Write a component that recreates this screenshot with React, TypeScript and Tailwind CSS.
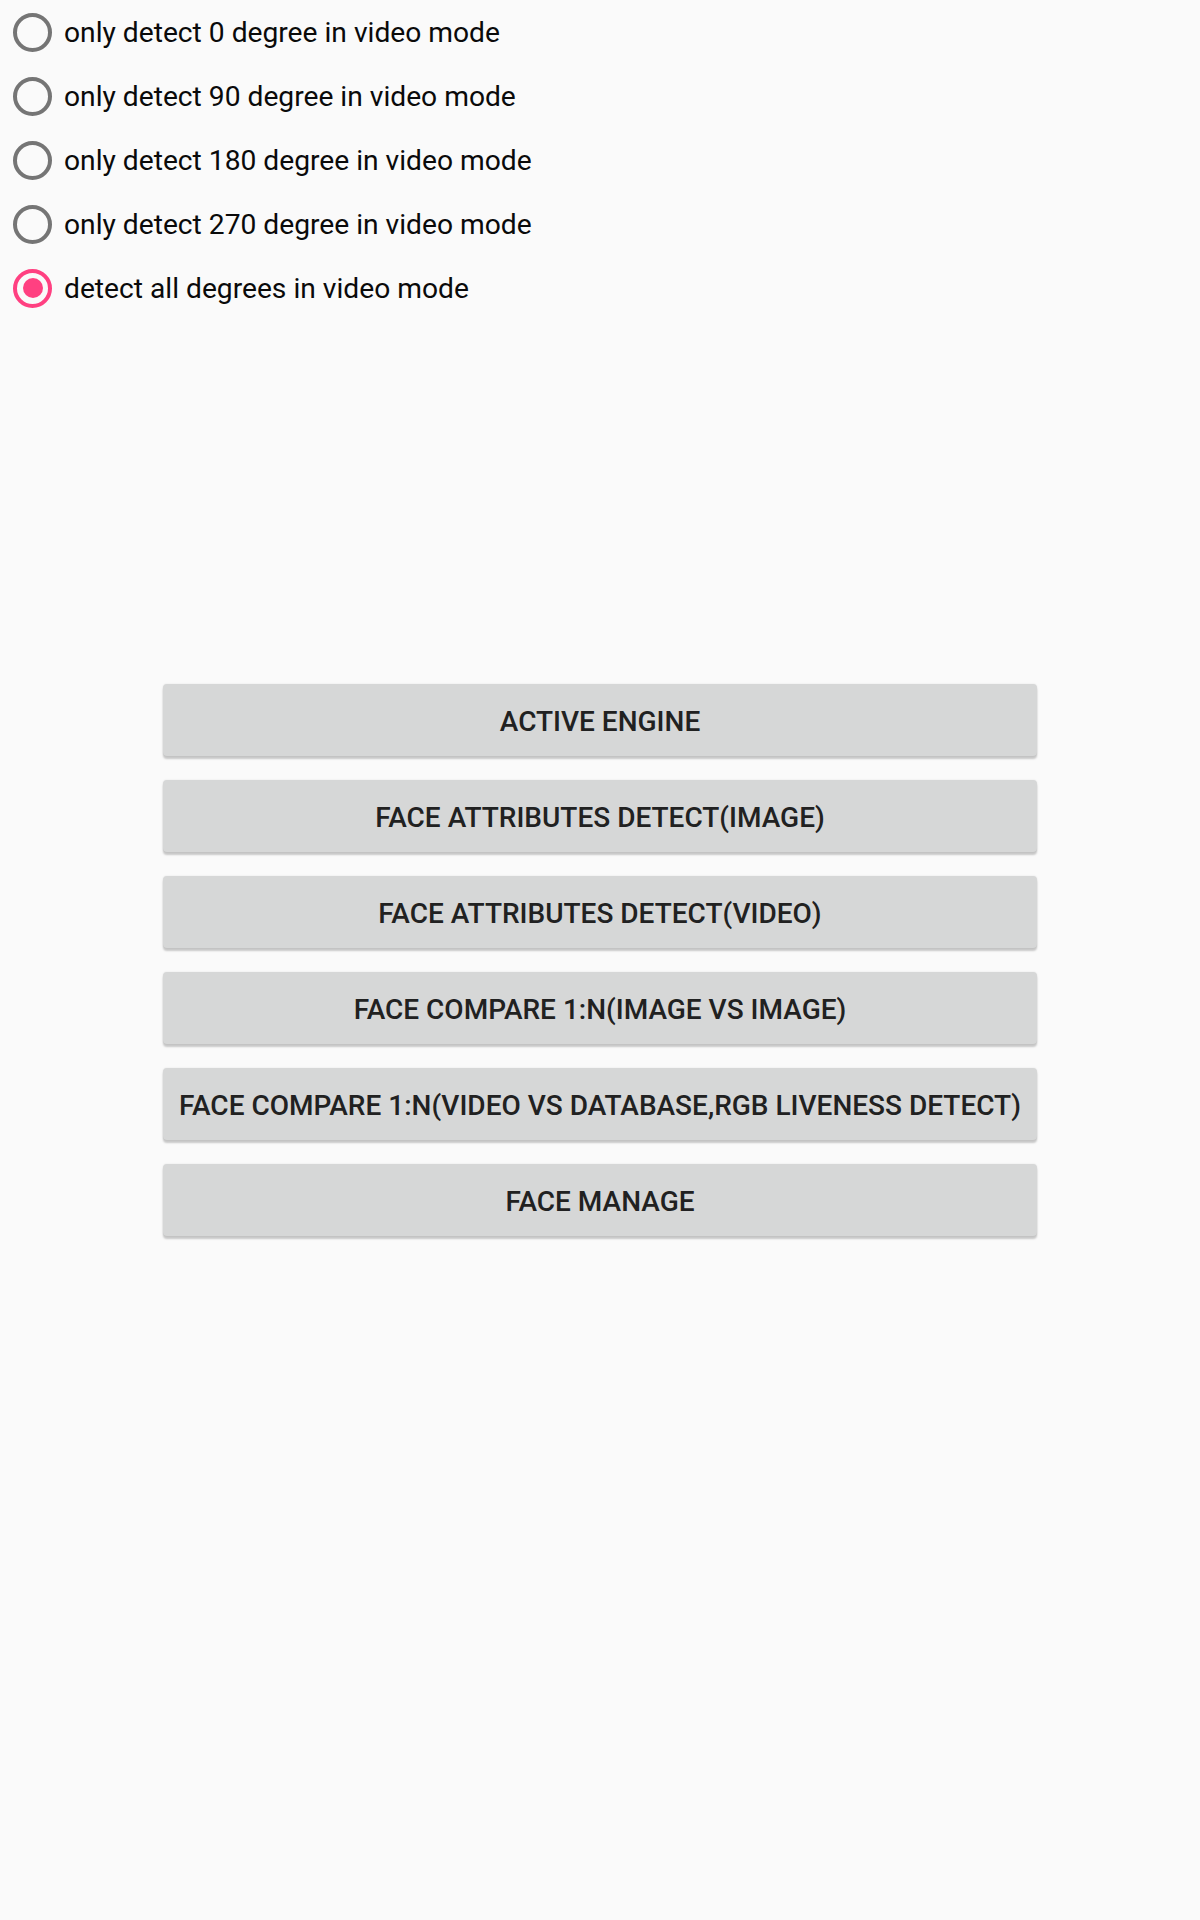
import React, { useState } from "react";

const options = [
  "only detect 0 degree in video mode",
  "only detect 90 degree in video mode",
  "only detect 180 degree in video mode",
  "only detect 270 degree in video mode",
  "detect all degrees in video mode",
];

const actions = [
  "ACTIVE ENGINE",
  "FACE ATTRIBUTES DETECT(IMAGE)",
  "FACE ATTRIBUTES DETECT(VIDEO)",
  "FACE COMPARE 1:N(IMAGE VS IMAGE)",
  "FACE COMPARE 1:N(VIDEO VS DATABASE,RGB LIVENESS DETECT)",
  "FACE MANAGE",
];

function Radio({ checked }: { checked: boolean }) {
  return (
    <span
      className={
        checked
          ? "flex h-[39px] w-[39px] shrink-0 items-center justify-center rounded-full border-[4px] border-[#ff4081]"
          : "flex h-[39px] w-[39px] shrink-0 items-center justify-center rounded-full border-[4px] border-[#757575]"
      }
    >
      {checked && <span className="h-[20px] w-[20px] rounded-full bg-[#ff4081]" />}
    </span>
  );
}

export default function App() {
  const [selected, setSelected] = useState(4);

  return (
    <div className="min-h-[1920px] w-full bg-[#fafafa] font-['Roboto','Liberation_Sans',sans-serif]">
      <div className="flex flex-col">
        {options.map((label, i) => (
          <button
            key={label}
            onClick={() => setSelected(i)}
            className="flex h-[64px] items-center gap-[12px] pl-[13px] text-left"
          >
            <Radio checked={selected === i} />
            <span className="pt-[2px] text-[28.2px] leading-none text-[#0a0a0a]">{label}</span>
          </button>
        ))}
      </div>

      <div className="mx-auto mt-[364px] flex w-[874px] flex-col gap-[24px]">
        {actions.map((label) => (
          <button
            key={label}
            className="flex h-[72px] items-center justify-center rounded-[4px] bg-[#d6d7d7] px-[16px] pt-[3px] text-[28px] font-medium leading-none text-[#212121] shadow-[0_3px_2px_rgba(0,0,0,0.2),0_0_2px_rgba(0,0,0,0.1)]"
          >
            {label}
          </button>
        ))}
      </div>
    </div>
  );
}
